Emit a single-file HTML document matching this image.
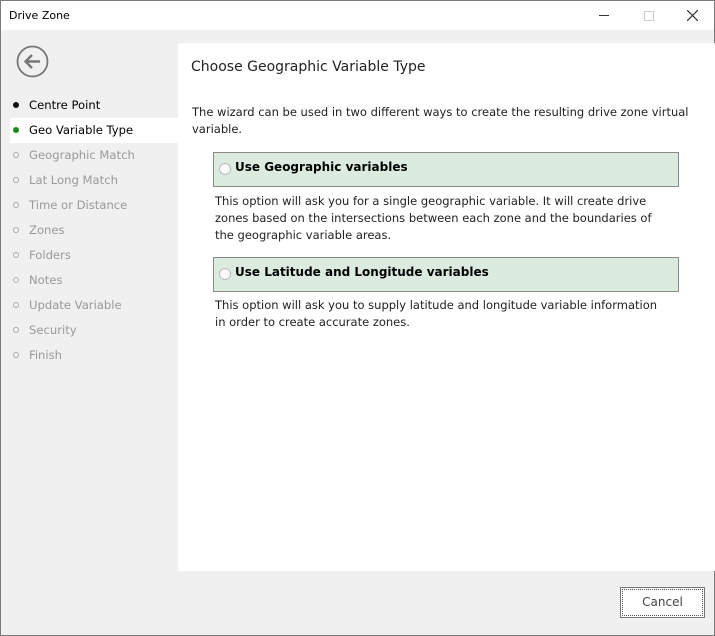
<!DOCTYPE html>
<html><head><style>
*{margin:0;padding:0;box-sizing:border-box}
body{width:715px;height:636px;font-family:"DejaVu Sans","Liberation Sans",sans-serif;font-size:11.5px;color:#000;position:relative;overflow:hidden;background:#f0f0f0}
.win{position:absolute;left:0;top:0;width:715px;height:636px;border:1px solid #7a7a7a;background:#f0f0f0}
.title{position:absolute;left:0;top:0;width:713px;height:29px;background:#fff}
.title span{position:absolute;left:8px;top:8px;font-size:11px}
.panel{position:absolute;left:177px;top:42px;width:537px;height:528px;background:#fff}
.nav{position:absolute;left:8px;font-size:11.6px;white-space:nowrap}
.nav i{display:inline-block;width:6px;height:6px;border-radius:50%;margin-right:10px;vertical-align:1px;margin-left:4px}
.sel{position:absolute;left:9px;top:117px;width:168px;height:25px;background:#fff}
.box{position:absolute;left:212px;width:466px;height:35px;background:#dcebe0;border:1px solid #8a8a8a;font-weight:bold;font-size:12px;padding:7px 0 0 21px;white-space:nowrap}
.box:before{content:"";position:absolute;left:5px;top:10px;width:10px;height:10px;border-radius:50%;border:1px solid #bbb;background:#fafafa}
.p{position:absolute;left:214px;font-size:11.5px;line-height:17px;color:#222;white-space:nowrap}
</style></head><body>
<div class="win">
<div class="title"><span>Drive Zone</span>
<div style="position:absolute;left:598px;top:14px;width:10px;height:1px;background:#333"></div>
<div style="position:absolute;left:643px;top:10px;width:10px;height:10px;border:1px solid #ccc"></div>
<svg style="position:absolute;left:686px;top:9px" width="11" height="11"><path d="M0 0L11 11M11 0L0 11" stroke="#333" stroke-width="1.2"/></svg>
</div>
<svg style="position:absolute;left:15px;top:44px" width="33" height="33"><circle cx="16.5" cy="16.5" r="15" fill="none" stroke="#777" stroke-width="1.8"/><path d="M24 16.5H10M16 10L9.5 16.5L16 23" fill="none" stroke="#777" stroke-width="2.4"/></svg>
<div class="sel"></div>
<div class="nav" style="top:97px"><i style="background:#111"></i>Centre Point</div>
<div class="nav" style="top:122px"><i style="background:#1a8a1a"></i>Geo Variable Type</div>
<div class="nav" style="top:147px;color:#999"><i style="border:1.5px solid #aaa"></i>Geographic Match</div>
<div class="nav" style="top:172px;color:#999"><i style="border:1.5px solid #aaa"></i>Lat Long Match</div>
<div class="nav" style="top:197px;color:#999"><i style="border:1.5px solid #aaa"></i>Time or Distance</div>
<div class="nav" style="top:222px;color:#999"><i style="border:1.5px solid #aaa"></i>Zones</div>
<div class="nav" style="top:247px;color:#999"><i style="border:1.5px solid #aaa"></i>Folders</div>
<div class="nav" style="top:272px;color:#999"><i style="border:1.5px solid #aaa"></i>Notes</div>
<div class="nav" style="top:297px;color:#999"><i style="border:1.5px solid #aaa"></i>Update Variable</div>
<div class="nav" style="top:322px;color:#999"><i style="border:1.5px solid #aaa"></i>Security</div>
<div class="nav" style="top:347px;color:#999"><i style="border:1.5px solid #aaa"></i>Finish</div>
<div class="panel"></div>
<div style="position:absolute;left:190px;top:58px;font-size:14px;color:#222">Choose Geographic Variable Type</div>
<div class="p" style="left:191px;top:103px">The wizard can be used in two different ways to create the resulting drive zone virtual<br>variable.</div>
<div class="box" style="top:151px">Use Geographic variables</div>
<div class="p" style="top:192px">This option will ask you for a single geographic variable. It will create drive<br>zones based on the intersections between each zone and the boundaries of<br>the geographic variable areas.</div>
<div class="box" style="top:256px">Use Latitude and Longitude variables</div>
<div class="p" style="top:296px">This option will ask you to supply latitude and longitude variable information<br>in order to create accurate zones.</div>
<div style="position:absolute;left:619px;top:586px;width:85px;height:31px;border:1px solid #777;background:#fff;padding:1px"><div style="border:1px dotted #555;height:27px;text-align:center;line-height:25px;color:#444;font-size:12px">Cancel</div></div>
</div>
</body></html>
